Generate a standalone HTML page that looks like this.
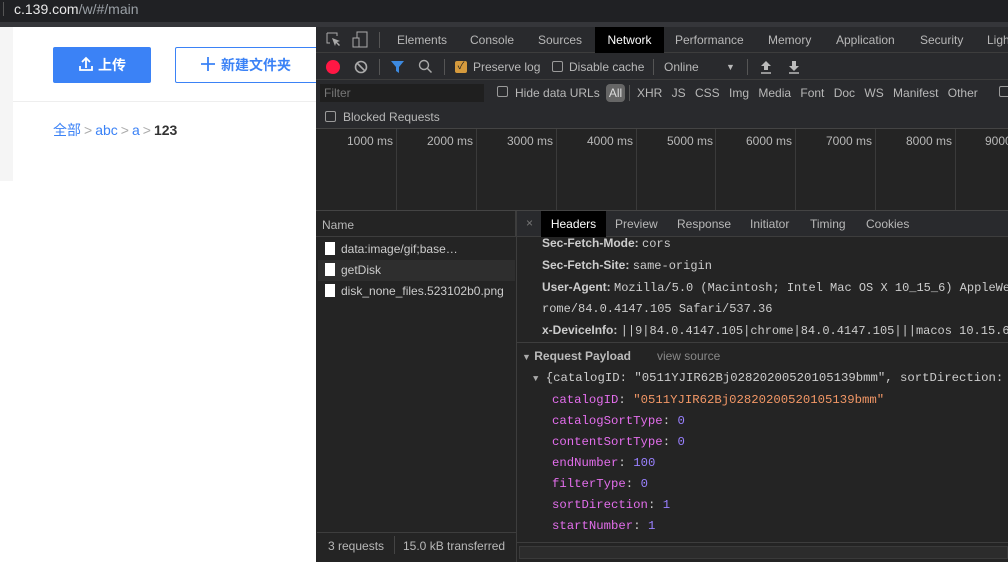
<!DOCTYPE html><html><head><style>
*{margin:0;padding:0;box-sizing:border-box}
body{width:1008px;height:562px;overflow:hidden;background:#fff;font-family:"Liberation Sans","Noto Sans CJK SC",sans-serif;position:relative}
.a{position:absolute;white-space:nowrap}
.dt{color:#b8b8b8;font-size:12px}
.mono{font-family:"Liberation Mono",monospace;font-size:12px}
.cb{position:absolute;width:11px;height:11px;border:1px solid #9a9a9a;border-radius:2px}
.ch{color:#aaa;margin:0 3px}
</style></head><body>
<div class="a" style="left:0;top:0;width:1008px;height:22px;background:#202124"></div>
<div class="a" style="left:3px;top:2px;width:1px;height:14px;background:#555"></div>
<div class="a" style="left:14px;top:1px;font-size:14px;color:#e8e8e8">c.139.com<span style="color:#9aa0a6">/w/#/main</span></div>
<div class="a" style="left:0;top:22px;width:1008px;height:5px;background:#35363a"></div>
<div class="a" style="left:0;top:27px;width:13px;height:154px;background:#f5f5f5"></div>
<div class="a" style="left:13px;top:101px;width:303px;height:1px;background:#eee"></div>
<div class="a" style="left:53px;top:47px;width:98px;height:36px;background:#3b82f6;border-radius:2px;color:#fff;font-size:14px;font-weight:bold;text-align:center;line-height:36px">
<svg width="16" height="16" viewBox="0 0 16 16" style="vertical-align:-2px;margin-right:4px"><path d="M8 12V2M4 6l4-4 4 4M2 10v4h12v-4" stroke="#fff" stroke-width="1.8" fill="none"/></svg>上传</div>
<div class="a" style="left:175px;top:47px;width:150px;height:36px;border:1px solid #3b82f6;border-radius:2px;color:#3b82f6;font-size:14px;font-weight:bold;line-height:34px;padding-left:24px">
<svg width="16" height="16" viewBox="0 0 16 16" style="vertical-align:-2px;margin-right:5px"><path d="M8 1v14M1 8h14" stroke="#3b82f6" stroke-width="1.8"/></svg>新建文件夹</div>
<div class="a" style="left:53px;top:120px;font-size:14px;color:#3b82f6">全部<span class="ch">&gt;</span>abc<span class="ch">&gt;</span>a<span class="ch">&gt;</span><b style="color:#333">123</b></div>
<!-- devtools -->
<div class="a" style="left:316px;top:27px;width:692px;height:535px;background:#242424"></div>
<div class="a" style="left:316px;top:27px;width:692px;height:26px;background:#292a2d;border-bottom:1px solid #3d3d3d"></div>
<svg class="a" style="left:326px;top:32px" width="16" height="16"><path d="M1 1h10v3M1 1v10h3" stroke="#aaa" fill="none"/><path d="M6 6l8 3-3 1 3 3-1 1-3-3-1 3z" fill="#aaa"/></svg>
<svg class="a" style="left:352px;top:31px" width="16" height="18"><rect x="5" y="1" width="10" height="15" stroke="#aaa" fill="none"/><rect x="1" y="7" width="6" height="9" stroke="#aaa" fill="#292a2d"/></svg>
<div class="a" style="left:379px;top:32px;width:1px;height:16px;background:#555"></div>
<div class="a dt" style="left:397px;top:33px">Elements</div>
<div class="a dt" style="left:470px;top:33px">Console</div>
<div class="a dt" style="left:538px;top:33px">Sources</div>
<div class="a" style="left:595px;top:27px;width:69px;height:26px;background:#000;color:#fff;font-size:12px;text-align:center;line-height:26px">Network</div>
<div class="a dt" style="left:675px;top:33px">Performance</div>
<div class="a dt" style="left:768px;top:33px">Memory</div>
<div class="a dt" style="left:836px;top:33px">Application</div>
<div class="a dt" style="left:920px;top:33px">Security</div>
<div class="a dt" style="left:987px;top:33px">Ligh</div>
<div class="a" style="left:316px;top:53px;width:692px;height:27px;background:#292a2d;border-bottom:1px solid #3d3d3d"></div>
<div class="a" style="left:326px;top:60px;width:14px;height:14px;border-radius:50%;background:#ff1744"></div>
<svg class="a" style="left:354px;top:60px" width="14" height="14"><circle cx="7" cy="7" r="5.5" stroke="#aaa" stroke-width="1.6" fill="none"/><path d="M3 3l8 8" stroke="#aaa" stroke-width="1.6"/></svg>
<div class="a" style="left:379px;top:59px;width:1px;height:16px;background:#555"></div>
<svg class="a" style="left:390px;top:60px" width="15" height="14"><path d="M1 1h13l-5 6v6l-3-2V7z" fill="#3d8ae0"/></svg>
<svg class="a" style="left:418px;top:59px" width="15" height="15"><circle cx="6" cy="6" r="4.5" stroke="#aaa" stroke-width="1.4" fill="none"/><path d="M9.5 9.5l4 4" stroke="#aaa" stroke-width="1.5"/></svg>
<div class="a" style="left:444px;top:59px;width:1px;height:16px;background:#555"></div>
<div class="a" style="left:455px;top:61px;width:12px;height:12px;background:#d59a3d;border-radius:2px;color:#222;font-size:10px;line-height:12px;text-align:center">✓</div>
<div class="a dt" style="left:473px;top:60px">Preserve log</div>
<div class="cb" style="left:552px;top:61px"></div>
<div class="a dt" style="left:569px;top:60px">Disable cache</div>
<div class="a" style="left:653px;top:59px;width:1px;height:16px;background:#555"></div>
<div class="a dt" style="left:664px;top:60px">Online</div>
<div class="a dt" style="left:726px;top:62px;font-size:9px">▼</div>
<div class="a" style="left:747px;top:59px;width:1px;height:16px;background:#555"></div>
<svg class="a" style="left:760px;top:60px" width="12" height="14"><path d="M6 1l5 5H8v4H4V6H1z" fill="#bbb"/><path d="M1 13h10" stroke="#bbb" stroke-width="1.5"/></svg>
<svg class="a" style="left:788px;top:60px" width="12" height="14"><path d="M4 1h4v5h3l-5 5-5-5h3z" fill="#bbb"/><path d="M1 13h10" stroke="#bbb" stroke-width="1.5"/></svg>
<div class="a" style="left:316px;top:80px;width:692px;height:25px;background:#292a2d"></div>
<div class="a" style="left:320px;top:84px;width:164px;height:18px;background:#1f1f1f;color:#777;font-size:12px;padding:2px 4px">Filter</div>
<div class="cb" style="left:497px;top:86px"></div>
<div class="a dt" style="left:515px;top:86px">Hide data URLs</div>
<div class="a" style="left:606px;top:84px;width:19px;height:18px;background:#666;border-radius:4px;color:#ddd;font-size:12px;text-align:center;line-height:18px">All</div>
<div class="a" style="left:629px;top:85px;width:1px;height:16px;background:#555"></div>
<div class="a dt" style="left:637px;top:86px;word-spacing:6px">XHR JS CSS Img Media Font Doc WS Manifest Other</div>
<div class="cb" style="left:999px;top:86px"></div>
<div class="a" style="left:316px;top:105px;width:692px;height:24px;background:#292a2d;border-bottom:1px solid #444"></div>
<div class="cb" style="left:325px;top:111px"></div>
<div class="a dt" style="left:343px;top:110px">Blocked Requests</div>
<div class="a" style="left:316px;top:129px;width:692px;height:82px;background:#242424;border-bottom:1px solid #444"></div>
<div class="a dt" style="left:347px;top:134px">1000 ms</div>
<div class="a dt" style="left:427px;top:134px">2000 ms</div>
<div class="a dt" style="left:507px;top:134px">3000 ms</div>
<div class="a dt" style="left:587px;top:134px">4000 ms</div>
<div class="a dt" style="left:667px;top:134px">5000 ms</div>
<div class="a dt" style="left:746px;top:134px">6000 ms</div>
<div class="a dt" style="left:826px;top:134px">7000 ms</div>
<div class="a dt" style="left:906px;top:134px">8000 ms</div>
<div class="a dt" style="left:985px;top:134px">9000</div>
<div class="a" style="left:396px;top:129px;width:1px;height:81px;background:#3a3a3a;box-shadow:80px 0 #3a3a3a,160px 0 #3a3a3a,240px 0 #3a3a3a,319px 0 #3a3a3a,399px 0 #3a3a3a,479px 0 #3a3a3a,559px 0 #3a3a3a"></div>
<div class="a" style="left:316px;top:211px;width:200px;height:26px;border-bottom:1px solid #3d3d3d;border-right:1px solid #3d3d3d"></div>
<div class="a dt" style="left:322px;top:218px">Name</div>
<div class="a" style="left:516px;top:211px;width:1px;height:351px;background:#3d3d3d"></div>
<div class="a" style="left:318px;top:260px;width:197px;height:21px;background:#2e2e2e"></div>
<div class="a" style="left:325px;top:242px;width:10px;height:13px;background:#fff"></div>
<div class="a" style="left:325px;top:263px;width:10px;height:13px;background:#fff"></div>
<div class="a" style="left:325px;top:284px;width:10px;height:13px;background:#fff"></div>
<div class="a dt" style="left:341px;top:242px;color:#ccc">data:image/gif;base…</div>
<div class="a dt" style="left:341px;top:263px;color:#ccc">getDisk</div>
<div class="a dt" style="left:341px;top:284px;color:#ccc">disk_none_files.523102b0.png</div>
<div class="a" style="left:317px;top:532px;width:199px;height:28px;border-top:1px solid #3d3d3d"></div>
<div class="a dt" style="left:328px;top:539px">3 requests</div>
<div class="a" style="left:394px;top:536px;width:1px;height:18px;background:#444"></div>
<div class="a dt" style="left:403px;top:539px">15.0 kB transferred</div>
<div class="a" style="left:517px;top:211px;width:491px;height:26px;background:#292a2d;border-bottom:1px solid #3d3d3d"></div>
<div class="a dt" style="left:526px;top:216px;color:#777">×</div>
<div class="a" style="left:541px;top:211px;width:65px;height:26px;background:#000;color:#fff;font-size:12px;line-height:26px;text-align:center">Headers</div>
<div class="a dt" style="left:615px;top:217px">Preview</div>
<div class="a dt" style="left:677px;top:217px">Response</div>
<div class="a dt" style="left:750px;top:217px">Initiator</div>
<div class="a dt" style="left:810px;top:217px">Timing</div>
<div class="a dt" style="left:866px;top:217px">Cookies</div>
<div class="a" style="left:542px;top:233px;color:#ccc;font-size:12px;line-height:21px">
<div><b>Sec-Fetch-Mode:</b> <span class="mono">cors</span></div>
<div><b>Sec-Fetch-Site:</b> <span class="mono">same-origin</span></div>
<div><b>User-Agent:</b> <span class="mono">Mozilla/5.0 (Macintosh; Intel Mac OS X 10_15_6) AppleWebKit</span></div>
<div class="mono">rome/84.0.4147.105 Safari/537.36</div>
<div><b>x-DeviceInfo:</b> <span class="mono">||9|84.0.4147.105|chrome|84.0.4147.105|||macos 10.15.6</span></div>
</div>
<div class="a" style="left:517px;top:342px;width:491px;height:1px;background:#3d3d3d"></div>
<div class="a" style="left:522px;top:349px;color:#aaa;font-size:12px"><span style="font-size:9px">▼</span> <b style="color:#bbb">Request Payload</b><span style="margin-left:26px;color:#888">view source</span></div>
<div class="a mono" style="left:533px;top:368px;color:#ccc;line-height:21px;font-size:12.3px">
<div><span style="font-size:9px;color:#aaa">▼</span> {catalogID: "0511YJIR62Bj02820200520105139bmm", sortDirection: 1</div>
<div style="padding-left:19px"><span style="color:#e36eec">catalogID</span>: <span style="color:#f29766">"0511YJIR62Bj02820200520105139bmm"</span></div>
<div style="padding-left:19px"><span style="color:#e36eec">catalogSortType</span>: <span style="color:#9980ff">0</span></div>
<div style="padding-left:19px"><span style="color:#e36eec">contentSortType</span>: <span style="color:#9980ff">0</span></div>
<div style="padding-left:19px"><span style="color:#e36eec">endNumber</span>: <span style="color:#9980ff">100</span></div>
<div style="padding-left:19px"><span style="color:#e36eec">filterType</span>: <span style="color:#9980ff">0</span></div>
<div style="padding-left:19px"><span style="color:#e36eec">sortDirection</span>: <span style="color:#9980ff">1</span></div>
<div style="padding-left:19px"><span style="color:#e36eec">startNumber</span>: <span style="color:#9980ff">1</span></div>
</div>
<div class="a" style="left:517px;top:542px;width:491px;height:1px;background:#3d3d3d"></div>
<div class="a" style="left:519px;top:546px;width:489px;height:13px;background:#2c2c2c;border:1px solid #3a3a3a"></div>
</body></html>
